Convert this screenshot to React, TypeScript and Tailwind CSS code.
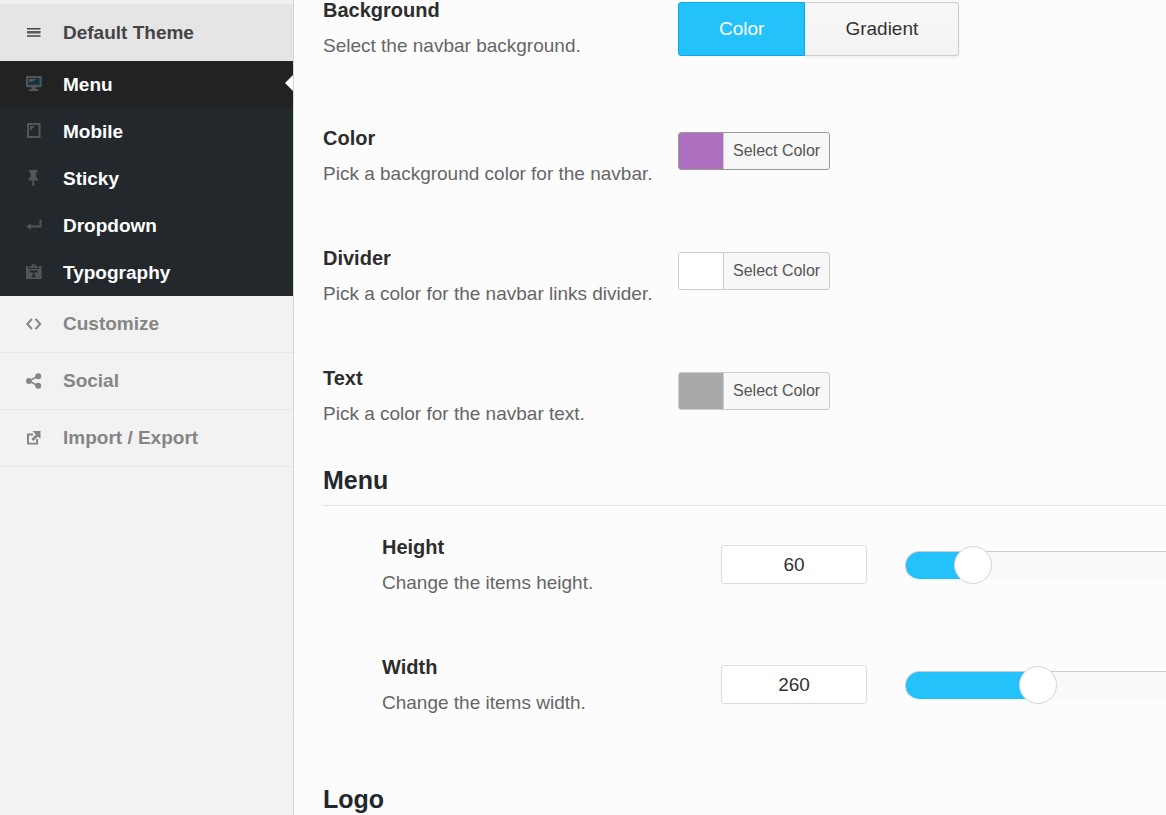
import React, { useState } from 'react';
import clsx from 'clsx';

type IconName = 'list' | 'monitor' | 'tablet' | 'pin' | 'return' | 'clipboard' | 'code' | 'share' | 'export';

const iconShapes: Record<IconName, React.ReactNode> = {
  list: (
    <>
      <path d="M1 3h13.500v1.500H1zM1 10.200h13.500v1.600H1z" />
      <path d="M1 6h13.500v2.600H1z" opacity="0.85" />
    </>
  ),
  monitor: (
    <>
      <path fill="#143242" d="M1 1h15.500v11H1z" />
      <path fillRule="evenodd" d="M0 0h15.500v11H0zM2 2v6.800h11.500V2z" />
      <path d="M3 3h8L8 4.800 3 6.500z" />
      <path d="M5.500 11h4.500v2.200h2.500V15h-9.500v-1.800h2.500z" />
    </>
  ),
  tablet: (
    <>
      <path fillRule="evenodd" d="M1 0h13.500v15H1zM3 2v11h9.500V2z" />
      <path d="M4 3h5L4 8z" />
    </>
  ),
  pin: <path d="M3 0h8.500v2l-1.500 1V6.500l2 2.700v1.300H8.200V16H6.300v-5.500H2.500V9.200l2-2.700V3L3 2z" />,
  return: <path d="M13.500 2.500h2V10.500H5v2.500L0 9.500 5 6v2.500h8.500z" />,
  clipboard: (
    <path
      fillRule="evenodd"
      d="M0 2h2.500v3h10.500V2h2.500v13H0zM3.500 4V2.500h1.700c.3-3.300 4.800-3.300 5.100 0H12V4zM7 1.200v1.300h1.500V1.200zM3.800 6.500v2.300h1.400v-.8h1.600v4H5.700v1.300h4.100v-1.300H8.700V8h1.600v.8h1.400V6.500z"
    />
  ),
  code: <path fill="none" stroke="currentColor" strokeWidth="2" d="M6 2.800 1.300 8 6 13.200M9.500 2.800 14.200 8 9.500 13.200" />,
  share: (
    <>
      <circle cx="2.900" cy="8" r="2.900" />
      <circle cx="12.200" cy="3.200" r="3" />
      <circle cx="12.200" cy="12.800" r="3" />
      <path fill="none" stroke="currentColor" strokeWidth="1.600" d="M12 3.200 3 8l9 4.800" />
    </>
  ),
  export: (
    <>
      <path d="M1 3.500h6v2H2.900v7.200h7.200V9H12v5.500H1z" />
      <path d="M6.500 1h8v8l-2.600-2.600-4.500 4.500-2-2 4.500-4.500z" />
    </>
  ),
};

const Icon = ({ name }: { name: IconName }) => (
  <svg viewBox="0 0 16 16" className="h-4 w-4 flex-shrink-0 overflow-visible" fill="currentColor" aria-hidden="true">
    {iconShapes[name]}
  </svg>
);

const submenu: { label: string; icon: IconName }[] = [
  { label: 'Menu', icon: 'monitor' },
  { label: 'Mobile', icon: 'tablet' },
  { label: 'Sticky', icon: 'pin' },
  { label: 'Dropdown', icon: 'return' },
  { label: 'Typography', icon: 'clipboard' },
];

const sections: { label: string; icon: IconName }[] = [
  { label: 'Customize', icon: 'code' },
  { label: 'Social', icon: 'share' },
  { label: 'Import / Export', icon: 'export' },
];

const Sidebar = () => {
  const [active, setActive] = useState('Menu');

  return (
    <aside className="w-[294px] flex-shrink-0 border-r border-[#d5d5d5] bg-linear-to-b from-[#f1f1f1] to-[#f3f3f3] pt-1 text-[19px] font-bold">
      <nav>
        <a href="#theme" className="flex h-[57px] items-center gap-[21px] border-t border-[#e8e8e8] bg-[#e5e5e5] px-[26px] text-[#444]">
          <Icon name="list" />
          Default Theme
        </a>

        <ul className="bg-[#23282d]">
          {submenu.map(item => (
            <li key={item.label}>
              <a
                href={`#${item.label.toLowerCase()}`}
                onClick={() => setActive(item.label)}
                className={clsx(
                  'relative flex h-[47px] items-center gap-[21px] px-[26px] pt-px text-white',
                  active === item.label && 'bg-[#222]'
                )}
              >
                <span className="pb-0.5 text-[#555]">
                  <Icon name={item.icon} />
                </span>
                {item.label}
                {active === item.label && (
                  <svg viewBox="0 0 8 16" className="absolute right-0 top-[14px] h-4 w-2" aria-hidden="true">
                    <path fill="#fcfcfc" d="M8 0v16L0 8z" />
                  </svg>
                )}
              </a>
            </li>
          ))}
        </ul>

        {sections.map(item => (
          <a
            key={item.label}
            href={`#${item.label.toLowerCase()}`}
            className="flex h-[57px] items-center gap-[21px] border-b border-[#e6e6e6] px-[26px] text-[#858585]"
          >
            <Icon name={item.icon} />
            {item.label}
          </a>
        ))}
      </nav>
    </aside>
  );
};

interface FieldProps {
  title: string;
  description: string;
  nested?: boolean;
  children: React.ReactNode;
}

const Field = ({ title, description, nested, children }: FieldProps) => (
  <div className="flex items-start">
    <div className={clsx('flex-shrink-0', nested ? 'w-[339px]' : 'w-[355px]')}>
      <h3 className="text-xl/5 font-bold text-[#2d2d2d]">{title}</h3>
      <p className="mt-[14px] whitespace-nowrap text-[19px]/6 text-[#666]">{description}</p>
    </div>
    {children}
  </div>
);

const BackgroundToggle = () => {
  const [value, setValue] = useState('Color');

  return (
    <div className="mt-0.5 flex">
      {['Color', 'Gradient'].map(option => (
        <button
          key={option}
          type="button"
          aria-pressed={value === option}
          onClick={() => setValue(option)}
          className={clsx(
            'h-[54px] border px-10 text-[19px] first:rounded-l-[3px] last:rounded-r-[3px] last:border-l-0',
            value === option
              ? 'border-[#0ea9e4] bg-[#23c2fa] text-white'
              : 'border-[#ccc] bg-linear-to-b from-[#f8f8f8] to-[#f3f3f3] text-[#333] shadow-[0_2px_3px_rgba(0,0,0,0.06)]'
          )}
        >
          {option}
        </button>
      ))}
    </div>
  );
};

const ColorButton = ({ swatch, className }: { swatch: string; className: string }) => (
  <button
    type="button"
    className={clsx('mt-1 flex h-[38px] overflow-hidden rounded-[3px] border bg-[#f7f7f7] text-base text-[#555]', className)}
  >
    <span className={clsx('h-full w-[45px] border-r border-[#ccc]', swatch)} />
    <span className="self-center px-[9px]">Select Color</span>
  </button>
);

interface SizeControlProps {
  label: string;
  initial: number;
  max: number;
}

const SizeControl = ({ label, initial, max }: SizeControlProps) => {
  const [value, setValue] = useState(initial);
  const style = { '--fill': `calc(19px + (100% - 38px) * ${value / max})` } as React.CSSProperties;

  return (
    <div className="mt-2 flex flex-1 items-start gap-[38px]">
      <input
        type="text"
        aria-label={label}
        value={value}
        onChange={e => setValue(Math.min(max, Number(e.target.value) || 0))}
        className="h-[39px] w-[146px] flex-shrink-0 rounded-[3px] border border-[#ddd] bg-white text-center text-[19px] text-[#333]"
      />
      <input
        type="range"
        aria-label={`${label} slider`}
        min={0}
        max={max}
        value={value}
        onChange={e => setValue(Number(e.target.value))}
        style={style}
        className="-mr-10 h-10 min-w-0 flex-1 appearance-none bg-transparent [&::-webkit-slider-runnable-track]:h-[29px] [&::-webkit-slider-runnable-track]:rounded-full [&::-webkit-slider-runnable-track]:border [&::-webkit-slider-runnable-track]:border-x-[#b5ccd6] [&::-webkit-slider-runnable-track]:border-t-[#ccc] [&::-webkit-slider-runnable-track]:border-b-[#f7f7f7] [&::-webkit-slider-runnable-track]:bg-[linear-gradient(to_right,#23c2fa_var(--fill),#f9f9f9_var(--fill))] [&::-webkit-slider-thumb]:-mt-[6px] [&::-webkit-slider-thumb]:h-[38px] [&::-webkit-slider-thumb]:w-[38px] [&::-webkit-slider-thumb]:appearance-none [&::-webkit-slider-thumb]:rounded-full [&::-webkit-slider-thumb]:border [&::-webkit-slider-thumb]:border-[#d5d5d5] [&::-webkit-slider-thumb]:bg-white"
      />
    </div>
  );
};

const SectionHeading = ({ children }: { children: React.ReactNode }) => (
  <h2 className="border-b border-[#e2e2e2] pb-[9px] text-[25px]/8 font-bold text-[#23282d]">{children}</h2>
);

export default function App() {
  return (
    <div className="flex h-screen overflow-hidden bg-[#fcfcfc] font-['Liberation_Sans',Arial,sans-serif]">
      <Sidebar />

      <main className="min-w-0 flex-1 overflow-hidden pl-[29px]">
        {/* Navbar */}
        <section className="mb-[38px]">
          <div className="mb-[70px]">
            <Field title="Background" description="Select the navbar background.">
              <BackgroundToggle />
            </Field>
          </div>
          <div className="space-y-[62px]">
            <Field title="Color" description="Pick a background color for the navbar.">
              <ColorButton swatch="bg-[#ad70c0]" className="border-[#999]" />
            </Field>
            <Field title="Divider" description="Pick a color for the navbar links divider.">
              <ColorButton swatch="bg-white" className="border-[#ccc]" />
            </Field>
            <Field title="Text" description="Pick a color for the navbar text.">
              <ColorButton swatch="bg-[#a9a9a9]" className="border-[#ccc]" />
            </Field>
          </div>
        </section>

        {/* Menu items */}
        <section className="mb-[68px]">
          <SectionHeading>Menu</SectionHeading>
          <div className="mt-[31px] space-y-[62px] pl-[59px]">
            <Field nested title="Height" description="Change the items height.">
              <SizeControl label="Height" initial={60} max={325} />
            </Field>
            <Field nested title="Width" description="Change the items width.">
              <SizeControl label="Width" initial={260} max={600} />
            </Field>
          </div>
        </section>

        <section>
          <SectionHeading>Logo</SectionHeading>
        </section>
      </main>
    </div>
  );
}
